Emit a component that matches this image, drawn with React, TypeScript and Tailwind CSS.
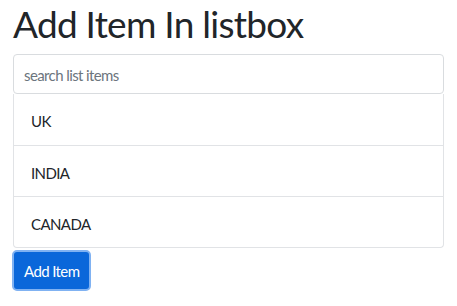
import { useState } from 'react'

export default function App() {
  const [items] = useState(['UK', 'INDIA', 'CANADA'])
  const [query, setQuery] = useState('')

  return (
    <div className="px-[13px] text-[#212529]" style={{ fontFamily: 'Lato, sans-serif' }}>
      <h1 className="text-[37px] leading-[46px] tracking-[-0.02em] pt-[1px] mb-[7px] whitespace-nowrap">Add Item In listbox</h1>

      <input
        value={query}
        onChange={(e) => setQuery(e.target.value)}
        placeholder="search list items"
        className="block w-full h-[40px] px-[10px] pt-[2px] border border-[#d9dcdf] rounded-[4px] text-[15px] tracking-[-0.04em] text-[#212529] placeholder:text-[#6c757d] outline-none"
      />

      <ul className="border border-[#e1e3e6] rounded-b-[4px] border-t-0">
        {items.map((item, i) => (
          <li
            key={item}
            className={`h-[51px] flex items-center px-[17px] pt-[4px] text-[15px] tracking-[-0.04em] ${i > 0 ? 'border-t border-[#e1e3e6]' : ''}`}
          >
            {item}
          </li>
        ))}
      </ul>

      <button className="mt-[2px] -ml-[1px] h-[41px] px-[10px] pt-[1px] rounded-[5px] bg-[#0a67da] text-white text-[15px] tracking-[-0.04em] border-[2px] border-[#80b2f2]">
        Add Item
      </button>
    </div>
  )
}
